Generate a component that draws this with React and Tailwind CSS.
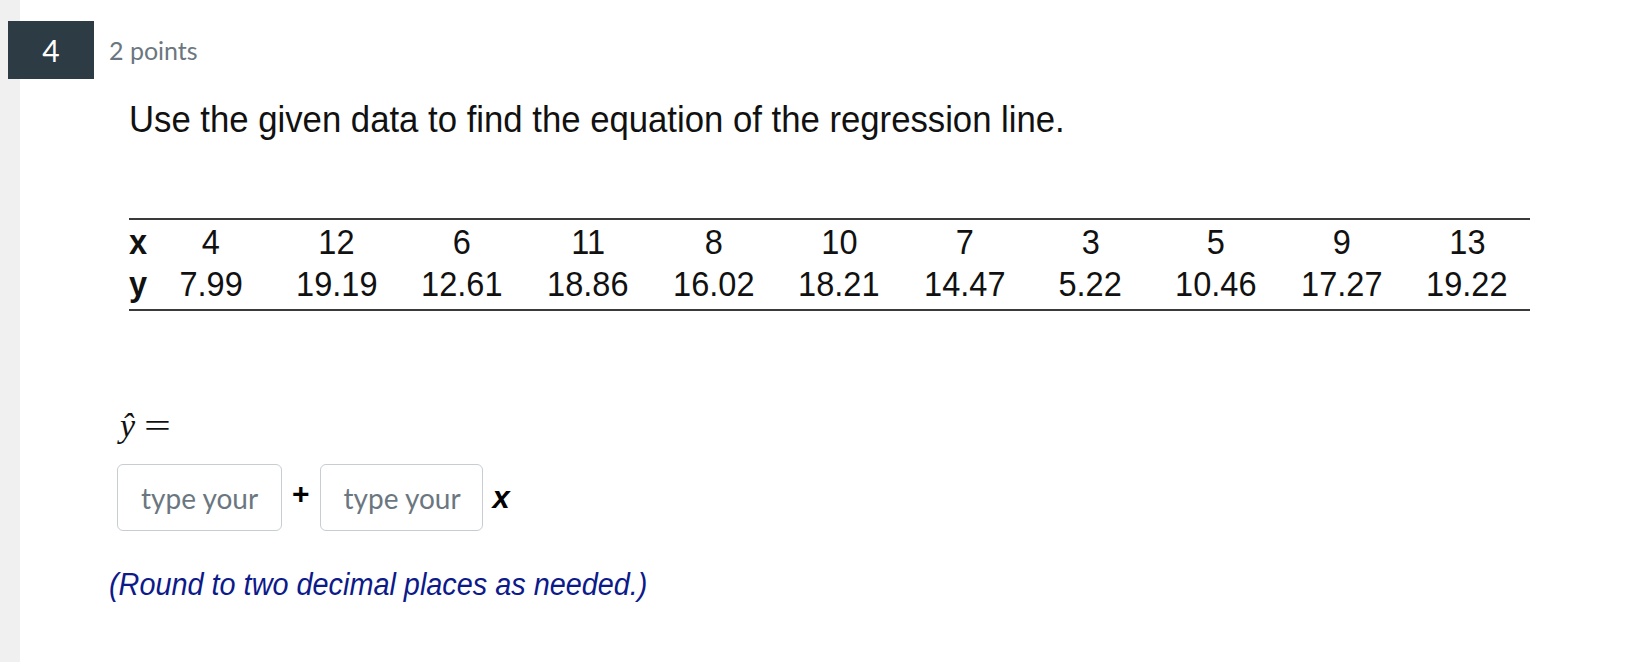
export default function App() {
  const xs = ["4", "12", "6", "11", "8", "10", "7", "3", "5", "9", "13"];
  const ys = ["7.99", "19.19", "12.61", "18.86", "16.02", "18.21", "14.47", "5.22", "10.46", "17.27", "19.22"];
  const arial = { fontFamily: '"Liberation Sans", Arial, sans-serif' };
  return (
    <div
      className="w-full h-[662px] bg-[linear-gradient(to_right,#f0f0f0_0px,#f0f0f0_20px,#ffffff_20px)] pl-[8px] pt-[21px]"
      style={{ fontFamily: 'Lato, "Noto Sans", sans-serif' }}
    >
      {/* header */}
      <div className="flex items-center">
        <div className="w-[86px] h-[58px] bg-[#2d3b45] text-white text-[30px] leading-none flex items-center justify-center">
          4
        </div>
        <div className="ml-[15px] text-[25px] text-[#6b7780] leading-none">2 points</div>
      </div>

      {/* question body */}
      <div className="pl-[121px]">
        <div
          className="mt-[22px] text-[37px] leading-[37px] text-[#111] whitespace-nowrap origin-left scale-x-[0.938]"
          style={arial}
        >
          Use the given data to find the equation of the regression line.
        </div>

        <div className="mt-[80px] w-[1401px] border-t-2 border-b-2 border-[#3a3a3a] pt-[1px] pb-[4px] text-[#111]" style={arial}>
          <div className="grid grid-cols-[19px_repeat(11,1fr)] text-[35px] leading-[42px]">
            <div className="font-bold">
              <span className="inline-block origin-left scale-x-[0.93]">x</span>
            </div>
            {xs.map((v, i) => (
              <div key={"x" + i} className="text-center">
                <span className="inline-block scale-x-[0.93]">{v}</span>
              </div>
            ))}
            <div className="font-bold">
              <span className="inline-block origin-left scale-x-[0.93]">y</span>
            </div>
            {ys.map((v, i) => (
              <div key={"y" + i} className="text-center">
                <span className="inline-block scale-x-[0.93]">{v}</span>
              </div>
            ))}
          </div>
        </div>
      </div>

      {/* answer area */}
      <div className="pl-[112px] mt-[97px] flex items-center text-[#111]" style={{ fontFamily: '"Liberation Serif", "Times New Roman", serif' }}>
        <span className="italic text-[34px] leading-[36px]">ŷ</span>
        <span className="ml-[9px] text-[34px] leading-[36px] inline-block scale-x-[1.4] origin-left">=</span>
      </div>

      <div className="pl-[109px] mt-[20px] flex items-center">
        <div className="w-[165px] h-[67px] border border-[#c7cdd1] rounded-[6px] bg-white flex items-center pl-[23px] text-[28px] text-[#6b7780] overflow-hidden whitespace-nowrap">
          type your
        </div>
        <span className="mx-[10px] text-[30px] font-bold text-black leading-none -mt-[8px]" style={arial}>+</span>
        <div className="w-[163px] h-[67px] border border-[#c7cdd1] rounded-[6px] bg-white flex items-center pl-[23px] text-[28px] text-[#6b7780] overflow-hidden whitespace-nowrap">
          type your
        </div>
        <span className="ml-[10px] text-[31px] font-bold italic text-black leading-none" style={arial}>x</span>
      </div>

      <div className="pl-[101px] mt-[36px]">
        <div className="text-[31px] leading-[36px] italic text-[#0d1a8a] whitespace-nowrap origin-left scale-x-[0.93]" style={arial}>
          (Round to two decimal places as needed.)
        </div>
      </div>
    </div>
  );
}
